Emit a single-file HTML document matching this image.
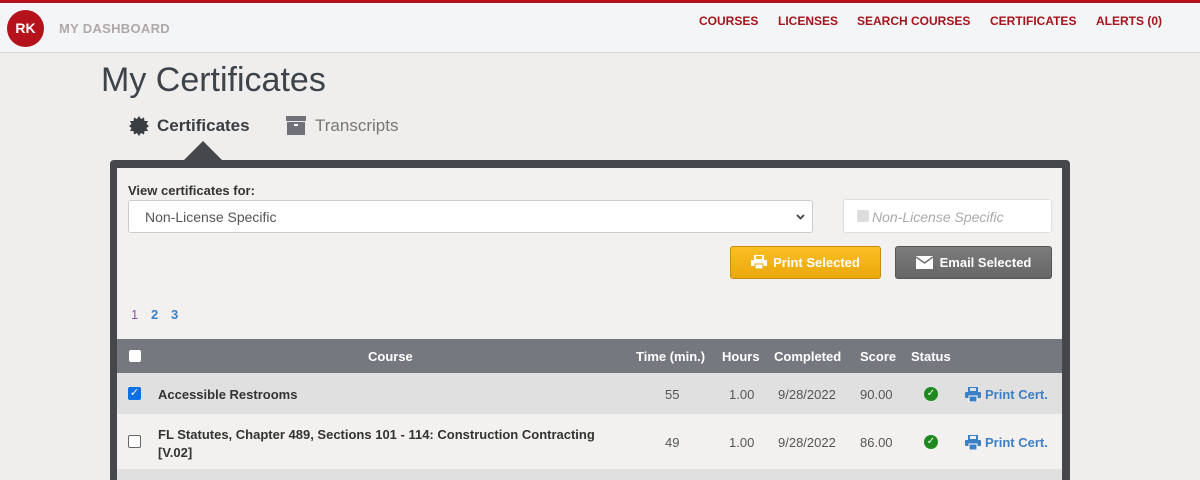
<!DOCTYPE html>
<html><head><style>
*{box-sizing:border-box;margin:0;padding:0}
html,body{width:1200px;height:480px;overflow:hidden}
body{background:#efeeec;font-family:"Liberation Sans",sans-serif;position:relative;color:#333}
.top{position:absolute;left:0;top:0;width:1200px;height:3px;background:#b5121b}
.hdr{position:absolute;left:0;top:3px;width:1200px;height:50px;background:#f4f5f7;border-bottom:1px solid #d8d8d8}
.av{position:absolute;left:7px;top:7px;width:37px;height:37px;border-radius:50%;background:#b5121b;color:#fff;font-weight:bold;font-size:14px;text-align:center;line-height:37px}
.dash{position:absolute;left:59px;top:18px;font-size:13px;font-weight:bold;color:#b0a8a8;letter-spacing:.3px}
.nav{position:absolute;top:11px;font-size:12px;font-weight:bold;color:#a3141c}
h1{position:absolute;left:101px;top:61px;font-size:34px;font-weight:normal;color:#3d434b}
.tab{position:absolute;top:116px;font-size:17px}
.panel{position:absolute;left:110px;top:160px;width:960px;height:330px;background:#46474b;border-radius:4px}
.inner{position:absolute;left:117px;top:168px;width:945px;height:320px;background:#f2f1ef}
.abs{position:absolute}
.btn{position:absolute;top:246px;height:33px;border-radius:3px;color:#fff;font-weight:bold;font-size:13px;text-align:center;line-height:31px}
.th{position:absolute;top:339px;left:117px;width:945px;height:34px;background:#75787f;color:#fff;font-weight:bold;font-size:13px}
.th span,.r span{position:absolute}
.r{position:absolute;left:117px;width:945px;font-size:13px;color:#555}
.pc{color:#3d7fc4;font-weight:bold}
</style></head><body>
<div class="top"></div>
<div class="hdr">
<div class="av">RK</div>
<div class="dash">MY DASHBOARD</div>
<div class="nav" style="left:699px">COURSES</div>
<div class="nav" style="left:778px">LICENSES</div>
<div class="nav" style="left:857px">SEARCH COURSES</div>
<div class="nav" style="left:990px">CERTIFICATES</div>
<div class="nav" style="left:1096px">ALERTS (0)</div>
</div>
<h1>My Certificates</h1>
<svg class="abs" style="left:129px;top:116px" width="20" height="20" viewBox="0 0 20 20"><polygon fill="#3a3d42" points="10,0 12,3 15,1.5 15.5,5 19,5 17.5,8 20,10 17.5,12 19,15 15.5,15 15,18.5 12,17 10,20 8,17 5,18.5 4.5,15 1,15 2.5,12 0,10 2.5,8 1,5 4.5,5 5,1.5 8,3"/></svg>
<div class="tab" style="left:157px;font-weight:bold;color:#3a3d42">Certificates</div>
<svg class="abs" style="left:286px;top:116px" width="20" height="19" viewBox="0 0 20 19"><rect x="0" y="0" width="20" height="5" fill="#6f7278"/><rect x="1" y="6" width="18" height="13" fill="#6f7278"/><rect x="8" y="8" width="4" height="2" fill="#fff"/></svg>
<div class="tab" style="left:315px;color:#777">Transcripts</div>
<div class="panel"></div>
<svg class="abs" style="left:182px;top:141px" width="42" height="21"><polygon points="21,0 42,21 0,21" fill="#46474b"/></svg>
<div class="inner"></div>
<div class="abs" style="left:128px;top:183px;font-size:13px;font-weight:bold;color:#333">View certificates for:</div>
<div class="abs" style="left:128px;top:200px;width:685px;height:33px;background:#fff;border:1px solid #ccc;border-radius:3px;font-size:14px;color:#555;padding:8px 16px">Non-License Specific<svg style="position:absolute;right:7px;top:13px" width="9" height="6" viewBox="0 0 9 6"><polyline points="1,1 4.5,4.5 8,1" fill="none" stroke="#444" stroke-width="1.8"/></svg></div>
<div class="abs" style="left:843px;top:199px;width:209px;height:34px;background:#fff;border:1px solid #ddd;border-radius:3px;font-size:14px;color:#aaa;font-style:italic;padding:9px 0 0 28px">Non-License Specific<span style="position:absolute;left:13px;top:10px;width:12px;height:12px;background:#ddd;border-radius:2px"></span></div>
<div class="btn" style="left:730px;width:151px;background:linear-gradient(#fbbf24,#eaa80b);border:1px solid #c98d0a">
<svg width="16" height="14" style="vertical-align:-2px;margin-right:6px" viewBox="0 0 16 14"><rect x="4" y="0" width="8" height="5" fill="none" stroke="#fff" stroke-width="2"/><rect x="0" y="5" width="16" height="6" fill="#fff"/><rect x="4" y="9" width="8" height="5" fill="#fff" stroke="#eaa80b"/></svg>Print Selected</div>
<div class="btn" style="left:895px;width:157px;background:linear-gradient(#7c7c7c,#666);border:1px solid #555">
<svg width="17" height="13" style="vertical-align:-2px;margin-right:7px" viewBox="0 0 17 13"><rect width="17" height="13" fill="#fff"/><polyline points="0,1 8.5,7 17,1" fill="none" stroke="#6e6e6e" stroke-width="1.5"/></svg>Email Selected</div>
<div class="abs" style="left:131px;top:307px;font-size:13px;color:#8a5aa8">1</div>
<div class="abs" style="left:151px;top:307px;font-size:13px;color:#3d7fc4;font-weight:bold">2</div>
<div class="abs" style="left:171px;top:307px;font-size:13px;color:#3d7fc4;font-weight:bold">3</div>
<div class="th">
<span style="left:12px;top:11px;width:12px;height:12px;background:#fff;border-radius:2px"></span>
<span style="left:251px;top:10px">Course</span>
<span style="left:519px;top:10px">Time (min.)</span>
<span style="left:605px;top:10px">Hours</span>
<span style="left:657px;top:10px">Completed</span>
<span style="left:743px;top:10px">Score</span>
<span style="left:794px;top:10px">Status</span>
</div>
<div class="r" style="top:373px;height:41px;background:#e0e0e0">
<span style="left:11px;top:14px;width:13px;height:13px;background:#0b6fe6;border-radius:2px;color:#fff;font-size:11px;line-height:13px;text-align:center">✓</span>
<span style="left:41px;top:14px;font-weight:bold;color:#333">Accessible Restrooms</span>
<span style="left:548px;top:14px">55</span><span style="left:612px;top:14px">1.00</span><span style="left:661px;top:14px">9/28/2022</span><span style="left:743px;top:14px">90.00</span>
<span style="left:807px;top:14px;width:14px;height:14px;border-radius:50%;background:#1e8a1e;color:#fff;font-size:10px;line-height:14px;text-align:center">✓</span>
<span class="pc" style="left:848px;top:14px"><svg width="16" height="15" style="vertical-align:-3px;margin-right:4px" viewBox="0 0 16 15"><rect x="4" y="0" width="8" height="5" fill="none" stroke="#3d7fc4" stroke-width="2"/><rect x="0" y="5" width="16" height="6" rx="1" fill="#3d7fc4"/><rect x="4" y="9" width="8" height="6" fill="#3d7fc4" stroke="#fff"/></svg>Print Cert.</span>
</div>
<div class="r" style="top:414px;height:55px;background:#f2f1ef">
<span style="left:11px;top:21px;width:13px;height:13px;background:#fff;border:1px solid #666;border-radius:2px"></span>
<span style="left:41px;top:12px;font-weight:bold;color:#333;line-height:18px;width:470px">FL Statutes, Chapter 489, Sections 101 - 114: Construction Contracting [V.02]</span>
<span style="left:548px;top:21px">49</span><span style="left:612px;top:21px">1.00</span><span style="left:661px;top:21px">9/28/2022</span><span style="left:743px;top:21px">86.00</span>
<span style="left:807px;top:21px;width:14px;height:14px;border-radius:50%;background:#1e8a1e;color:#fff;font-size:10px;line-height:14px;text-align:center">✓</span>
<span class="pc" style="left:848px;top:21px"><svg width="16" height="15" style="vertical-align:-3px;margin-right:4px" viewBox="0 0 16 15"><rect x="4" y="0" width="8" height="5" fill="none" stroke="#3d7fc4" stroke-width="2"/><rect x="0" y="5" width="16" height="6" rx="1" fill="#3d7fc4"/><rect x="4" y="9" width="8" height="6" fill="#3d7fc4" stroke="#fff"/></svg>Print Cert.</span>
</div>
<div class="r" style="top:469px;height:19px;background:#e0e0e0"></div>
</body></html>
